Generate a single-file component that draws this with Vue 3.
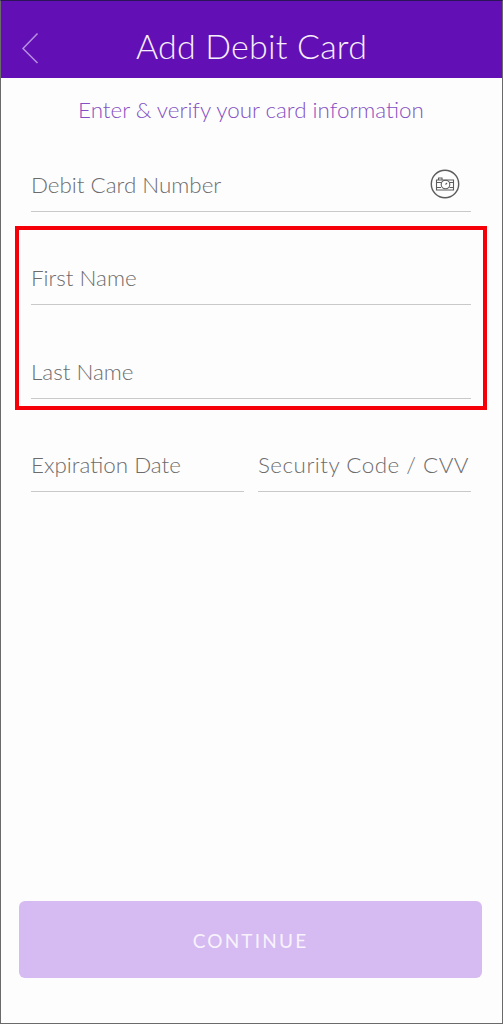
<template>
  <div class="screen">
    <header class="topbar">
      <button class="back" aria-label="Back">
        <svg width="18" height="32" viewBox="0 0 18 32">
          <path d="M16.5 1.5 L2 16.5 L16.5 31" fill="none" stroke="#b78fe0" stroke-width="1.5" />
        </svg>
      </button>
      <h1 class="title">Add Debit Card</h1>
    </header>

    <main class="content">
      <p class="intro">Enter &amp; verify your card information</p>

      <div class="field card-number">
        <span>Debit Card Number</span>
        <svg class="camera" width="30" height="30" viewBox="0 0 30 30">
          <circle cx="15" cy="15" r="13.7" fill="none" stroke="#5c5c5c" stroke-width="1.4" />
          <g fill="none" stroke="#5c5c5c" stroke-width="1.1">
            <path d="M6.5 11 H23.5 V21 H6.5 Z" />
            <path d="M8.5 11 V9 H12 V11" />
            <path d="M6.5 13.5 H11 M19.5 13.5 H23.5 M6.5 18.5 H11 M19.5 18.5 H23.5" />
            <circle cx="15.5" cy="15.5" r="4.3" />
            <path d="M15.5 15.5 L17 14" />
          </g>
        </svg>
      </div>

      <div class="highlight">
        <div class="field"><span>First Name</span></div>
        <div class="field"><span>Last Name</span></div>
      </div>

      <div class="row">
        <div class="field"><span>Expiration Date</span></div>
        <div class="field"><span class="wide">Security Code / CVV</span></div>
      </div>
    </main>

    <div class="footer">
      <button class="continue">CONTINUE</button>
    </div>
  </div>
</template>

<script setup>
</script>

<style>
html,
body {
  margin: 0;
  background: #fff;
}
</style>

<style scoped>
.screen {
  width: 503px;
  height: 1024px;
  box-sizing: border-box;
  display: flex;
  flex-direction: column;
  background: #fefdfe;
  border: 1px solid #6a6a6a;
  border-top-color: #2c1458;
  font-family: Lato, "Noto Sans", sans-serif;
}

.topbar {
  height: 77px;
  flex-shrink: 0;
  display: flex;
  align-items: center;
  justify-content: center;
  position: relative;
  background: #6210b5;
}

.back {
  position: absolute;
  left: 20px;
  top: 31px;
  padding: 0;
  border: none;
  background: none;
  line-height: 0;
}

.title {
  margin: 12px 0 0;
  color: #f6eefc;
  font-size: 34px;
  font-weight: 300;
  letter-spacing: 0.2px;
}

.content {
  flex: 1;
  padding: 0 31px 0 30px;
}

.intro {
  margin: 18px 0 0;
  text-align: center;
  color: #8450c2;
  font-size: 22.4px;
  font-weight: 300;
  line-height: 28px;
  height: 29px;
}

.field {
  height: 47px;
  box-sizing: border-box;
  display: flex;
  align-items: center;
  justify-content: space-between;
  padding-bottom: 8px;
  border-bottom: 1px solid #c9c9c9;
  color: #6c6c6c;
  font-size: 22.4px;
  font-weight: 300;
}

.wide {
  letter-spacing: 0.5px;
  white-space: nowrap;
}

.card-number {
  margin-top: 40px;
}

.camera {
  margin-right: 11px;
}

.highlight {
  margin: 14px -16px 0 -16px;
  padding: 28px 12px 7px;
  display: flex;
  flex-direction: column;
  gap: 47px;
  border: 4px solid #f50008;
  height: 184px;
  box-sizing: border-box;
}

.row {
  margin-top: 35px;
  display: grid;
  grid-template-columns: 1fr 1fr;
  gap: 14px;
}

.footer {
  padding: 0 20px 45px 18px;
}

.continue {
  display: block;
  width: 100%;
  height: 77px;
  padding: 2px 0 0;
  border: none;
  border-radius: 6px;
  background: #d5bbf2;
  color: #f8f2fd;
  font-family: inherit;
  font-size: 19px;
  font-weight: 400;
  letter-spacing: 2.2px;
}
</style>
